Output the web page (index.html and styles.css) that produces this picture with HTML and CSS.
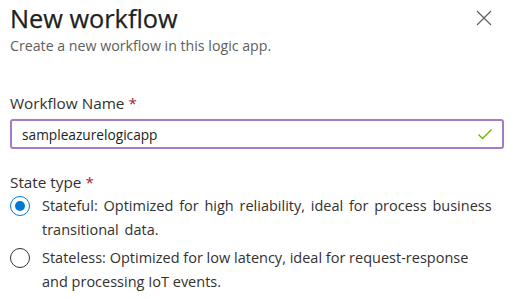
FILE: index.html
```html
<!DOCTYPE html>
<html>
<head>
<meta charset="utf-8">
<link rel="stylesheet" href="styles.css">
</head>
<body>
<div class="panel">
  <div class="header">
    <div class="titles">
      <h1 class="title">New workflow</h1>
      <p class="subtitle">Create a new workflow in this logic app.</p>
    </div>
    <button class="close" aria-label="Close">
      <svg width="16" height="16" viewBox="0 0 16 16"><path d="M1 1L15 15M15 1L1 15" stroke="#605e5c" stroke-width="1.2" fill="none"/></svg>
    </button>
  </div>

  <div class="field first">
    <label class="label">Workflow Name <span class="req">*</span></label>
    <div class="input">
      <span class="value">sampleazurelogicapp</span>
      <svg class="check" width="16" height="12" viewBox="0 0 16 12"><path d="M1.5 6.5L5.5 10.5L14.5 1.5" stroke="#6bb700" stroke-width="1.3" fill="none"/></svg>
    </div>
  </div>

  <div class="field second">
    <div class="label">State type <span class="req">*</span></div>
    <div class="options">
      <div class="option">
        <span class="radio checked"></span>
        <span class="opt-text wide">Stateful: Optimized for high reliability, ideal for process business<br>transitional data.</span>
      </div>
      <div class="option">
        <span class="radio"></span>
        <span class="opt-text">Stateless: Optimized for low latency, ideal for request-response<br>and processing IoT events.</span>
      </div>
    </div>
  </div>
</div>
</body>
</html>
```

FILE: styles.css
```css
* { box-sizing: border-box; }
html, body { margin: 0; padding: 0; background: #fff; }
body { font-family: "Open Sans", "Noto Sans", sans-serif; color: #323130; }
.panel { width: 513px; height: 299px; padding: 0 9px 0 10px; overflow: hidden; }
.header { display: flex; justify-content: space-between; align-items: flex-start; }
.title { margin: 0; font-size: 25.3px; font-weight: 400; line-height: 36px; color: #201f1e; -webkit-text-stroke: 0.25px #201f1e; }
.subtitle { margin: 1px 0 0; font-size: 14.2px; line-height: 18px; color: #605e5c; }
.close { border: none; background: none; padding: 0; margin: 10px 12px 0 0; width: 16px; height: 16px; display: flex; }
.field.first { margin-top: 38px; }
.field.second { margin-top: 23px; }
.label { display: block; font-size: 15.3px; line-height: 20px; color: #323130; }
.req { color: #a4262c; }
.input { margin-top: 6px; height: 30px; border: 2px solid #a57bc8; border-radius: 3px; display: flex; align-items: center; justify-content: space-between; padding: 0 9px 0 10px; }
.value { font-size: 13.7px; color: #201f1e; }
.check { display: block; }
.options { margin-top: 2px; display: flex; flex-direction: column; gap: 4px; }
.option { display: flex; align-items: flex-start; gap: 12px; }
.radio { flex: none; width: 20px; height: 20px; border: 1px solid #323130; border-radius: 50%; margin-top: 2px; position: relative; }
.radio.checked { border-color: #0078d4; border-width: 1.5px; }
.radio.checked::after { content: ""; position: absolute; left: 50%; top: 50%; width: 10px; height: 10px; margin: -5px 0 0 -5px; border-radius: 50%; background: #0078d4; }
.opt-text { font-size: 14.5px; line-height: 24px; color: #323130; white-space: nowrap; }
.opt-text.wide { word-spacing: 2px; }
```
